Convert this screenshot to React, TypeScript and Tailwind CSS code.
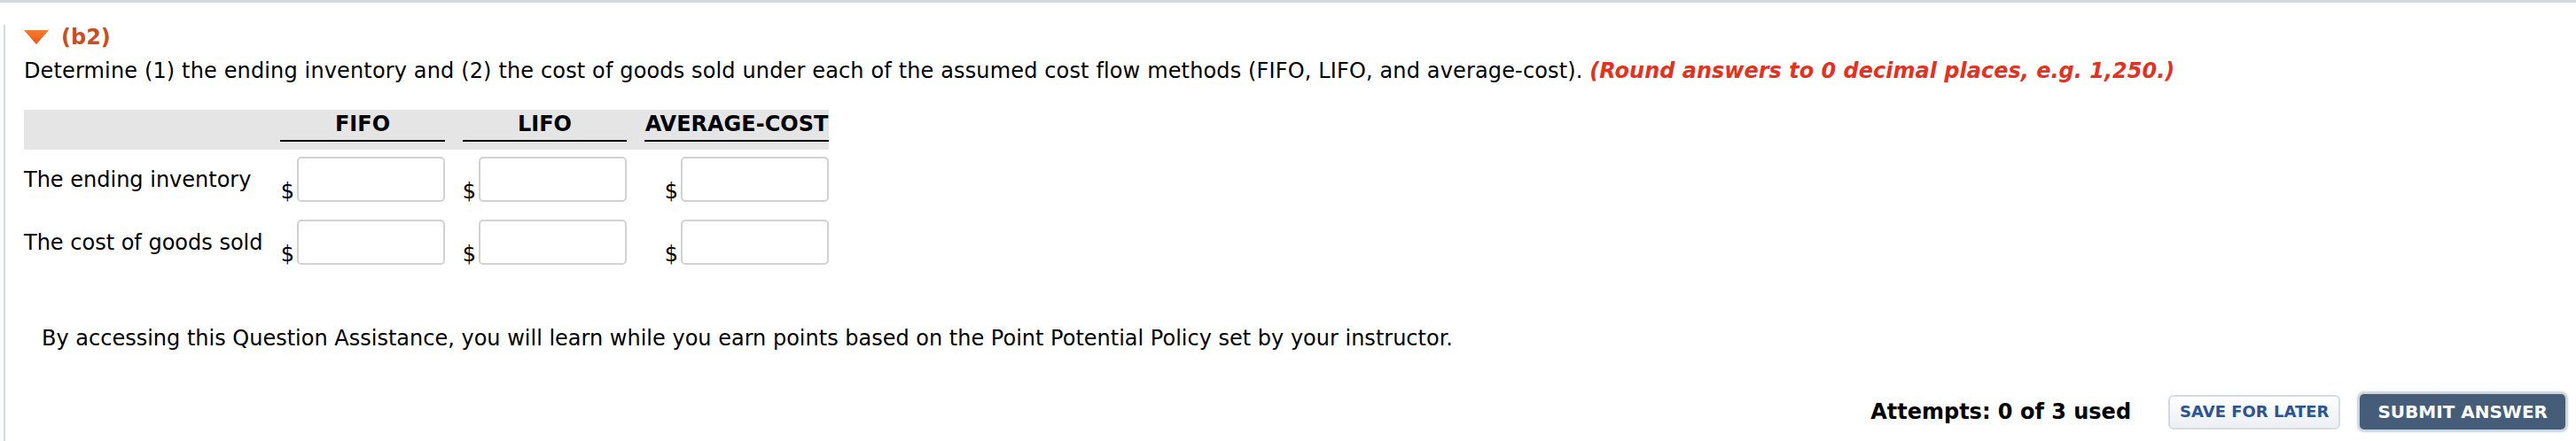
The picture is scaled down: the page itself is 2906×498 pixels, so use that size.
import React from 'react';

const columns = ['FIFO', 'LIFO', 'AVERAGE-COST'];
const rows = ['The ending inventory', 'The cost of goods sold'];

function Caret() {
  return (
    <svg width="28" height="16" viewBox="0 0 28 16" className="shrink-0">
      <defs>
        <linearGradient id="caret" x1="0" y1="0" x2="0" y2="1">
          <stop offset="0" stopColor="#f47d30" />
          <stop offset="0.5" stopColor="#f26a24" />
          <stop offset="1" stopColor="#e0541c" />
        </linearGradient>
      </defs>
      <polygon points="0,0 28,0 14,16" fill="url(#caret)" />
    </svg>
  );
}

function MoneyInput() {
  return (
    <div className="flex items-end justify-end">
      <span className="leading-none">$</span>
      <input
        type="text"
        className="ml-[3px] w-[167px] h-[51px] rounded-[5px] border-2 border-[#d2d2d2] bg-white outline-none"
      />
    </div>
  );
}

export default function App() {
  return (
    <div className="w-[2906px] h-[498px] overflow-hidden bg-white border-t-[3px] border-[#d3dae3] font-['Verdana','DejaVu_Sans',sans-serif] text-[24px] leading-[28px] text-black">
      <div className="ml-[4px] h-full border-l-2 border-[#d3dae3] pl-[21px]">
        {/* part heading */}
        <div className="mt-[25px] flex items-center gap-[14px] h-[28px]">
          <Caret />
          <span className="font-bold text-[#c8501e]">(b2)</span>
        </div>

        {/* instructions */}
        <p className="mt-[10px] whitespace-nowrap">
          <span className="tracking-[0.14px]">
            Determine (1) the ending inventory and (2) the cost of goods sold under each of the assumed cost flow
            methods (FIFO, LIFO, and average-cost).{' '}
          </span>
          <span className="font-bold italic text-[#e3321f]">(Round answers to 0 decimal places, e.g. 1,250.)</span>
        </p>

        {/* answer table */}
        <div className="mt-[30px] w-[908px]">
          <div className="grid grid-cols-[269px_186px_185px_208px] gap-x-[20px] bg-[#e5e5e5] pt-[2px] pb-[9px]">
            <div />
            {columns.map((c) => (
              <div key={c} className="text-center font-bold pb-[4px] border-b-2 border-black whitespace-nowrap">
                {c}
              </div>
            ))}
          </div>
          <div className="mt-[8px] flex flex-col gap-[20px]">
            {rows.map((r) => (
              <div key={r} className="grid grid-cols-[269px_186px_185px_208px] gap-x-[20px] items-center">
                <div className="whitespace-nowrap">{r}</div>
                {columns.map((c) => (
                  <MoneyInput key={c} />
                ))}
              </div>
            ))}
          </div>
        </div>

        {/* assistance note */}
        <p className="mt-[69px] pl-[20px] whitespace-nowrap">
          By accessing this Question Assistance, you will learn while you earn points based on the Point Potential Policy
          set by your instructor.
        </p>

        {/* footer actions */}
        <div className="mt-[49px] flex items-center justify-end pr-[12px]">
          <span className="font-bold whitespace-nowrap">Attempts: 0 of 3 used</span>
          <button className="ml-[42px] h-[39px] px-[11px] rounded-[6px] border-2 border-[#d6dbe3] bg-gradient-to-b from-white to-[#eceff4] text-[18px] font-bold text-[#2c5491] whitespace-nowrap">
            SAVE FOR LATER
          </button>
          <button className="ml-[22px] h-[40px] px-[20px] rounded-[5px] bg-[#455d78] text-[20px] font-bold text-white shadow-[0_0_2px_3px_#cbd3dd] whitespace-nowrap">
            SUBMIT ANSWER
          </button>
        </div>
      </div>
    </div>
  );
}
